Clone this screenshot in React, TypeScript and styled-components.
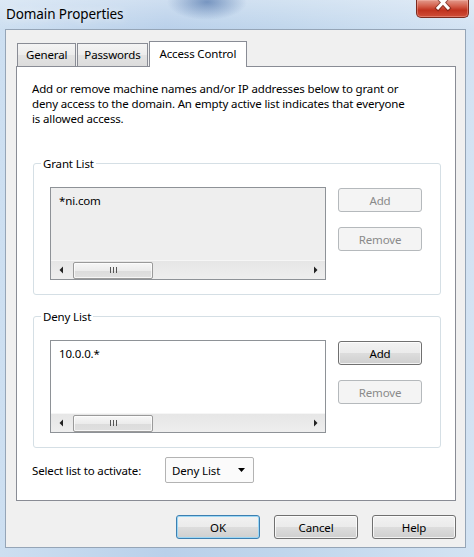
import React from "react";
import styled, { createGlobalStyle, css } from "styled-components";

const uiFont = `"Segoe UI", "Noto Sans", "Open Sans", sans-serif`;

const GlobalStyle = createGlobalStyle`
  html, body { margin: 0; padding: 0; }
  body {
    font-family: ${uiFont};
    font-size: 11.5px;
    letter-spacing: -0.15px;
    color: #000;
    background: #c4d8ee;
  }
  * { box-sizing: border-box; }
`;

const Window = styled.div`
  width: 474px;
  height: 557px;
  display: flex;
  flex-direction: column;
  overflow: hidden;
  background:
    radial-gradient(ellipse 40px 18px at 207px 2px, rgba(60, 100, 160, 0.6), rgba(60, 100, 160, 0) 100%),
    linear-gradient(180deg, rgba(255, 255, 255, 0.3) 0, rgba(255, 255, 255, 0) 30px),
    linear-gradient(90deg, #cddff1 0%, #b9d0ea 35%, #c0d6ec 60%, #d3e3f3 100%);
`;

const TitleBar = styled.div`
  height: 29px;
  flex: none;
  display: flex;
  align-items: flex-start;
  justify-content: space-between;
  padding: 0 5px 0 6px;
`;

const Title = styled.div`
  font-size: 13.5px;
  letter-spacing: -0.1px;
  line-height: 29px;
  color: #000;
  text-shadow: 0 0 8px rgba(255, 255, 255, 0.9);
`;

const CloseButton = styled.div`
  width: 53px;
  height: 18px;
  border: 1px solid #7b2a1e;
  border-top: none;
  border-radius: 0 0 5px 5px;
  background: linear-gradient(180deg, #e39a8c 0%, #d4614d 35%, #c0321e 60%, #cf4e38 100%);
  box-shadow: inset 0 0 0 1px rgba(255, 200, 190, 0.35);
  display: flex;
  justify-content: center;
  overflow: hidden;
`;

const Client = styled.div`
  flex: 1;
  margin: 0 8px 9px 5px;
  border: 1px solid #95a5b7;
  background: #f0f0f0;
  padding: 11px 9px 8px 10px;
  display: flex;
  flex-direction: column;
`;

const TabStrip = styled.div`
  height: 25px;
  display: flex;
  align-items: flex-end;
  gap: 1px;
  padding-left: 1px;
  position: relative;
  z-index: 1;
`;

const Tab = styled.div<{ $active?: boolean; $padX: number }>`
  height: 23px;
  padding: 0 ${(p) => p.$padX}px;
  line-height: 22px;
  border: 1px solid #898c95;
  border-bottom: none;
  background: linear-gradient(180deg, #f4f4f4 0%, #ececec 50%, #e2e2e2 51%, #dcdcdc 100%);
  white-space: nowrap;
  ${(p) =>
    p.$active &&
    css`
      height: 26px;
      margin-bottom: -1px;
      line-height: 23px;
      background: #fff;
    `}
`;

const TabPage = styled.div`
  height: 435px;
  border: 1px solid #898c95;
  background: #fff;
  padding: 14px 14px 0 15px;
  display: flex;
  flex-direction: column;
`;

const Description = styled.p`
  margin: 0;
  line-height: 15px;
  white-space: nowrap;
`;

const Group = styled.fieldset<{ $top: number }>`
  margin: ${(p) => p.$top}px 0 0 1px;
  width: 408px;
  padding: 0;
  border: 1px solid #d5dfe5;
  border-radius: 3px;
  min-width: 0;
`;

const Legend = styled.legend`
  margin-left: 7px;
  padding: 0 2px;
  line-height: 15px;
`;

const GroupBody = styled.div`
  display: flex;
  gap: 12px;
  padding: 16px 18px 14px 16px;
`;

const ListBox = styled.div<{ $disabled?: boolean }>`
  width: 276px;
  height: 93px;
  border: 1px solid #8e9297;
  background: ${(p) => (p.$disabled ? "#eeeeee" : "#ffffff")};
  display: flex;
  flex-direction: column;
`;

const Items = styled.div`
  flex: 1;
  padding: 5px 8px;
  line-height: 15px;
`;

const ScrollBar = styled.div`
  height: 19px;
  display: flex;
  align-items: center;
  border-top: 1px solid #f6f6f6;
  background: linear-gradient(180deg, #e6e6e6 0%, #eeeeee 100%);
`;

const ScrollArrow = styled.div`
  width: 20px;
  height: 100%;
  display: flex;
  align-items: center;
  justify-content: center;
`;

const Track = styled.div`
  flex: 1;
  height: 100%;
  display: flex;
  align-items: center;
`;

const Thumb = styled.div`
  width: 80px;
  height: 17px;
  margin-left: 2px;
  border: 1px solid #9a9a9a;
  border-radius: 2px;
  background: linear-gradient(180deg, #f7f7f7 0%, #ececec 50%, #dcdcdc 51%, #e0e0e0 100%);
  box-shadow: inset 0 0 0 1px rgba(255, 255, 255, 0.7);
  display: flex;
  align-items: center;
  justify-content: center;
`;

const ButtonColumn = styled.div`
  display: flex;
  flex-direction: column;
  gap: 15px;
  padding-top: 1px;
`;

const Button = styled.div<{ $disabled?: boolean; $default?: boolean }>`
  width: 84px;
  height: 24px;
  border: 1px solid #707070;
  border-radius: 3px;
  background: linear-gradient(180deg, #f2f2f2 0%, #ebebeb 49%, #dddddd 50%, #cfcfcf 100%);
  box-shadow: inset 0 0 0 1px rgba(255, 255, 255, 0.75);
  display: flex;
  align-items: center;
  justify-content: center;
  line-height: 15px;
  color: #000;
  ${(p) =>
    p.$disabled &&
    css`
      border-color: #b5b9bc;
      background: #f4f4f4;
      box-shadow: none;
      color: #8a8a8a;
    `}
  ${(p) =>
    p.$default &&
    css`
      border-color: #3c7fb1;
      box-shadow: inset 0 0 0 1px #9cd7f5;
    `}
`;

const SelectRow = styled.div`
  margin-top: 9px;
  display: flex;
  align-items: center;
  gap: 12px;
`;

const SelectLabel = styled.span`
  width: 121px;
  white-space: nowrap;
`;

const Combo = styled.div`
  width: 89px;
  height: 26px;
  border: 1px solid #b3b3b3;
  border-radius: 2px;
  background: #fbfbfb;
  display: flex;
  align-items: center;
  justify-content: space-between;
  padding: 0 8px 0 6px;
`;

const ButtonRow = styled.div`
  margin-top: 14px;
  display: flex;
  justify-content: flex-end;
  gap: 14px;
`;

const LeftArrow = () => (
  <svg width="5" height="8" viewBox="0 0 5 8">
    <path d="M4 0.5 L0.5 4 L4 7.5 Z" fill="#222" />
  </svg>
);

const RightArrow = () => (
  <svg width="5" height="8" viewBox="0 0 5 8">
    <path d="M1 0.5 L4.5 4 L1 7.5 Z" fill="#222" />
  </svg>
);

const Grip = () => (
  <svg width="7" height="6" viewBox="0 0 7 6">
    <path d="M0.5 0 V6 M3.5 0 V6 M6.5 0 V6" stroke="#555" strokeWidth="1" />
  </svg>
);

const DownArrow = () => (
  <svg width="7" height="4" viewBox="0 0 7 4">
    <path d="M0 0 H7 L3.5 4 Z" fill="#000" />
  </svg>
);

const CloseGlyph = () => (
  <svg width="20" height="12" viewBox="0 0 20 12">
    <path d="M5 -3 L15 8 M15 -3 L5 8" stroke="#5a1a12" strokeWidth="5" strokeLinecap="square" opacity="0.55" />
    <path d="M5 -3 L15 8 M15 -3 L5 8" stroke="#ffffff" strokeWidth="3" strokeLinecap="square" />
  </svg>
);

const List: React.FC<{ item: string; disabled?: boolean }> = ({ item, disabled }) => (
  <ListBox $disabled={disabled}>
    <Items>{item}</Items>
    <ScrollBar>
      <ScrollArrow>
        <LeftArrow />
      </ScrollArrow>
      <Track>
        <Thumb>
          <Grip />
        </Thumb>
      </Track>
      <ScrollArrow>
        <RightArrow />
      </ScrollArrow>
    </ScrollBar>
  </ListBox>
);

export default function App() {
  return (
    <>
      <GlobalStyle />
      <Window>
        <TitleBar>
          <Title>Domain Properties</Title>
          <CloseButton>
            <CloseGlyph />
          </CloseButton>
        </TitleBar>
        <Client>
          <TabStrip>
            <Tab $padX={8}>General</Tab>
            <Tab $padX={6}>Passwords</Tab>
            <Tab $padX={10} $active>
              Access Control
            </Tab>
          </TabStrip>
          <TabPage>
            <Description>
              Add or remove machine names and/or IP addresses below to grant or
              <br />
              deny access to the domain. An empty active list indicates that everyone
              <br />
              is allowed access.
            </Description>
            <Group $top={30}>
              <Legend>Grant List</Legend>
              <GroupBody>
                <List item="*ni.com" disabled />
                <ButtonColumn>
                  <Button $disabled>Add</Button>
                  <Button $disabled>Remove</Button>
                </ButtonColumn>
              </GroupBody>
            </Group>
            <Group $top={14}>
              <Legend>Deny List</Legend>
              <GroupBody>
                <List item="10.0.0.*" />
                <ButtonColumn>
                  <Button>Add</Button>
                  <Button $disabled>Remove</Button>
                </ButtonColumn>
              </GroupBody>
            </Group>
            <SelectRow>
              <SelectLabel>Select list to activate:</SelectLabel>
              <Combo>
                <span>Deny List</span>
                <DownArrow />
              </Combo>
            </SelectRow>
          </TabPage>
          <ButtonRow>
            <Button $default>OK</Button>
            <Button>Cancel</Button>
            <Button>Help</Button>
          </ButtonRow>
        </Client>
      </Window>
    </>
  );
}
